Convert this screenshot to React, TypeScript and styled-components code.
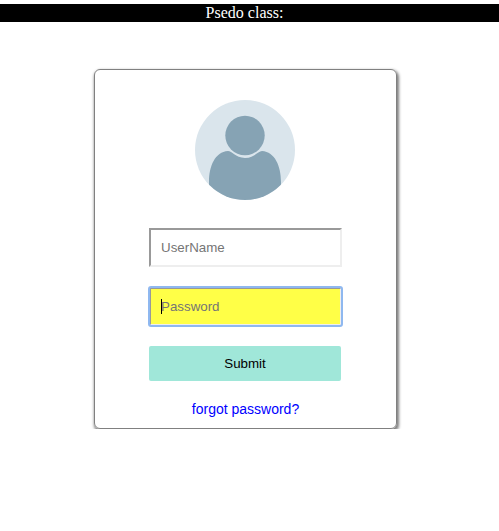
import { FC } from "react";
import styled, { createGlobalStyle } from "styled-components";

const GlobalStyle = createGlobalStyle`
  html, body {
    margin: 0;
    background: #fff;
  }
`;

const Avatar: FC = () => (
  <StAvatar viewBox="0 0 100 100" aria-hidden="true">
    <defs>
      <clipPath id="avatar-clip">
        <circle cx="50" cy="50" r="50" />
      </clipPath>
    </defs>
    <circle cx="50" cy="50" r="50" fill="#dae5ec" />
    <g clipPath="url(#avatar-clip)" fill="#86a3b4">
      <circle cx="50" cy="35.5" r="19.7" />
      <path d="M14 100 L14 82 C14 66 20 52 33 51 C37 51 40 57.5 50 58 C60 57.5 63 51 67 51 C80 52 86 66 86 82 L86 100 Z" />
    </g>
  </StAvatar>
);

export default function App() {
  return (
    <>
      <GlobalStyle />
      <StHeader>Psedo class:</StHeader>
      <StCard>
        <Avatar />
        <StForm onSubmit={(e) => e.preventDefault()}>
          <StInput type="text" placeholder="UserName" />
          <StPasswordRow>
            <StPassword type="password" placeholder="Password" autoFocus />
            <StCaret />
          </StPasswordRow>
          <StSubmit type="submit">Submit</StSubmit>
        </StForm>
        <StLink href="#">forgot password?</StLink>
      </StCard>
    </>
  );
}

const StHeader = styled.h1`
  box-sizing: border-box;
  margin: 4px 0 0;
  padding-right: 10px;
  height: 18px;
  background: #000;
  color: #fff;
  font: 400 16px/18px "Liberation Serif", serif;
  text-align: center;
`;

const StCard = styled.div`
  box-sizing: border-box;
  width: 303px;
  height: 360px;
  margin: 47px 0 0 94px;
  padding-top: 30px;
  display: flex;
  flex-direction: column;
  align-items: center;
  border: 1px solid #808080;
  border-radius: 6px;
  box-shadow: 1px 2px 3px 1px #808080;
`;

const StAvatar = styled.svg`
  display: block;
  width: 100px;
  height: 100px;
  flex: none;
  margin-left: -2px;
`;

const StForm = styled.form`
  margin-top: 28px;
  width: 193px;
  display: flex;
  flex-direction: column;
`;

const StInput = styled.input`
  box-sizing: border-box;
  width: 193px;
  height: 39px;
  padding: 0 10px;
  border: 2px solid;
  border-color: #999 #eee #eee #999;
  background: #fff;
  font: 13.33px "Liberation Sans", sans-serif;
  outline: none;

  &::placeholder {
    color: #757575;
  }
`;

const StPasswordRow = styled.div`
  position: relative;
  margin-top: 20px;
  height: 39px;
`;

const StPassword = styled(StInput)`
  &:focus {
    background: #ffff47;
    outline: 2px solid #8fb8f0;
    outline-offset: -1px;
    border-radius: 2px;
  }
`;

const StCaret = styled.span`
  position: absolute;
  left: 12px;
  top: 12px;
  width: 1px;
  height: 15px;
  background: #000;
`;

const StSubmit = styled.button`
  margin-top: 20px;
  width: 192px;
  height: 35px;
  border: none;
  border-radius: 2px;
  background: #a0e7d9;
  color: #000;
  font: 13.33px "Liberation Sans", sans-serif;
  cursor: pointer;
`;

const StLink = styled.a`
  margin-top: 20px;
  color: #0000ff;
  font: 14px/16px "Liberation Sans", sans-serif;
  text-decoration: none;
`;
